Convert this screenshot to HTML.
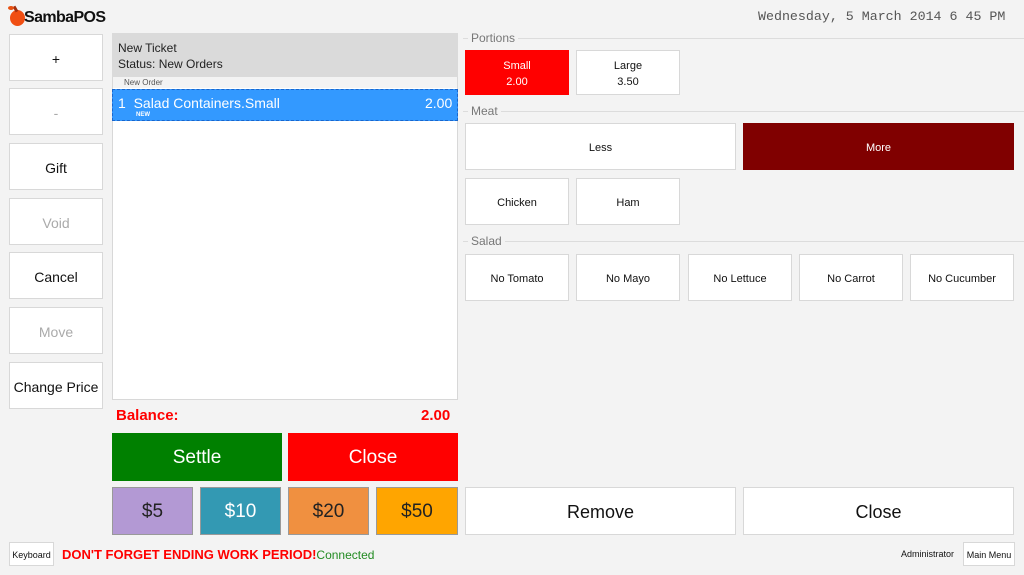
<!DOCTYPE html>
<html><head><style>
body{margin:0;width:1024px;height:575px;background:#f3f3f3;font-family:"Liberation Sans",sans-serif;position:relative;overflow:hidden}
.a{position:absolute;box-sizing:border-box}
.b{position:absolute;box-sizing:border-box;background:#fff;border:1px solid #d8d8d8;display:flex;align-items:center;justify-content:center;text-align:center;color:#111;font-size:14px;padding-top:2px}
.dis{color:#aaa}
.s{font-size:11px;line-height:16px}
.g{position:absolute;left:463px;width:561px;height:1px;background:#dcdcdc}
.gl{position:absolute;background:#f3f3f3;color:#777;font-size:12px;padding:0 3px}
.c{color:#fff;border:none;font-size:19px}
</style></head><body>
<div class="a" style="left:10px;top:10px;width:15px;height:16px;border-radius:50%;background:#f04e12"></div>
<div class="a" style="left:14px;top:6px;width:3px;height:6px;background:#a03010;transform:rotate(-30deg)"></div>
<div class="a" style="left:8px;top:6px;width:6px;height:4px;border-radius:50%;background:#e85010"></div>
<div class="a" style="left:24px;top:9px;font-size:16px;font-weight:bold;color:#111;letter-spacing:-0.6px">SambaPOS</div>
<div class="a" style="left:758px;top:9px;font-family:'Liberation Mono',monospace;font-size:13.3px;color:#555">Wednesday, 5 March 2014 6 45 PM</div>

<div class="b" style="left:9px;top:34px;width:94px;height:47px">+</div>
<div class="b dis" style="left:9px;top:88px;width:94px;height:47px">-</div>
<div class="b" style="left:9px;top:143px;width:94px;height:47px">Gift</div>
<div class="b dis" style="left:9px;top:198px;width:94px;height:47px">Void</div>
<div class="b" style="left:9px;top:252px;width:94px;height:47px">Cancel</div>
<div class="b dis" style="left:9px;top:307px;width:94px;height:47px">Move</div>
<div class="b" style="left:9px;top:362px;width:94px;height:47px">Change Price</div>

<div class="a" style="left:112px;top:33px;width:346px;height:367px;background:#fff;border:1px solid #d8d8d8"></div>
<div class="a" style="left:112px;top:33px;width:346px;height:44px;background:#dadada;font-size:12px;color:#222;padding:7px 6px;line-height:16px">New Ticket<br>Status: New Orders</div>
<div class="a" style="left:113px;top:77px;width:344px;height:11px;background:#f3f3f3;font-size:8px;color:#555;padding-left:11px;line-height:11px">New Order</div>
<div class="a" style="left:112px;top:89px;width:346px;height:32px;background:#3399ff;border:1px dashed #1a66cc"></div>
<div class="a" style="left:118px;top:95px;color:#fff;font-size:14px">1&nbsp;&nbsp;Salad Containers.Small</div>
<div class="a" style="left:425px;top:95px;color:#fff;font-size:14px">2.00</div>
<div class="a" style="left:136px;top:112px;color:#fff;font-size:6px;font-weight:bold">NEW</div>

<div class="a" style="left:116px;top:407px;color:#f00;font-weight:bold;font-size:15px">Balance:</div>
<div class="a" style="left:421px;top:407px;color:#f00;font-weight:bold;font-size:15px">2.00</div>
<div class="b c" style="left:112px;top:433px;width:170px;height:48px;background:#008000">Settle</div>
<div class="b c" style="left:288px;top:433px;width:170px;height:48px;background:#ff0000">Close</div>
<div class="b c" style="left:112px;top:487px;width:81px;height:48px;background:#b399d4;color:#222;border:1px solid #999">$5</div>
<div class="b c" style="left:200px;top:487px;width:81px;height:48px;background:#3399b3;border:1px solid #999">$10</div>
<div class="b c" style="left:288px;top:487px;width:81px;height:48px;background:#f09040;color:#222;border:1px solid #999">$20</div>
<div class="b c" style="left:376px;top:487px;width:82px;height:48px;background:#ffa500;color:#222;border:1px solid #999">$50</div>

<div class="g" style="top:38px"></div><div class="gl" style="left:468px;top:31px">Portions</div>
<div class="b s" style="left:465px;top:50px;width:104px;height:45px;background:#f00;color:#fff;border:none">Small<br>2.00</div>
<div class="b s" style="left:576px;top:50px;width:104px;height:45px">Large<br>3.50</div>
<div class="g" style="top:111px"></div><div class="gl" style="left:468px;top:104px">Meat</div>
<div class="b s" style="left:465px;top:123px;width:271px;height:47px">Less</div>
<div class="b s" style="left:743px;top:123px;width:271px;height:47px;background:#800000;color:#fff;border:none">More</div>
<div class="b s" style="left:465px;top:178px;width:104px;height:47px">Chicken</div>
<div class="b s" style="left:576px;top:178px;width:104px;height:47px">Ham</div>
<div class="g" style="top:241px"></div><div class="gl" style="left:468px;top:234px">Salad</div>
<div class="b s" style="left:465px;top:254px;width:104px;height:47px">No Tomato</div>
<div class="b s" style="left:576px;top:254px;width:104px;height:47px">No Mayo</div>
<div class="b s" style="left:688px;top:254px;width:104px;height:47px">No Lettuce</div>
<div class="b s" style="left:799px;top:254px;width:104px;height:47px">No Carrot</div>
<div class="b s" style="left:910px;top:254px;width:104px;height:47px">No Cucumber</div>

<div class="b" style="left:465px;top:487px;width:271px;height:48px;font-size:18px">Remove</div>
<div class="b" style="left:743px;top:487px;width:271px;height:48px;font-size:18px">Close</div>

<div class="b" style="left:9px;top:542px;width:45px;height:24px;font-size:9px">Keyboard</div>
<div class="a" style="left:62px;top:547px;color:#f00;font-weight:bold;font-size:13px">DON'T FORGET ENDING WORK PERIOD!<span style="color:#228b22;font-weight:normal;font-size:12px">Connected</span></div>
<div class="a" style="left:901px;top:549px;font-size:9px;color:#111">Administrator</div>
<div class="b" style="left:963px;top:542px;width:52px;height:24px;font-size:9px">Main Menu</div>
</body></html>
